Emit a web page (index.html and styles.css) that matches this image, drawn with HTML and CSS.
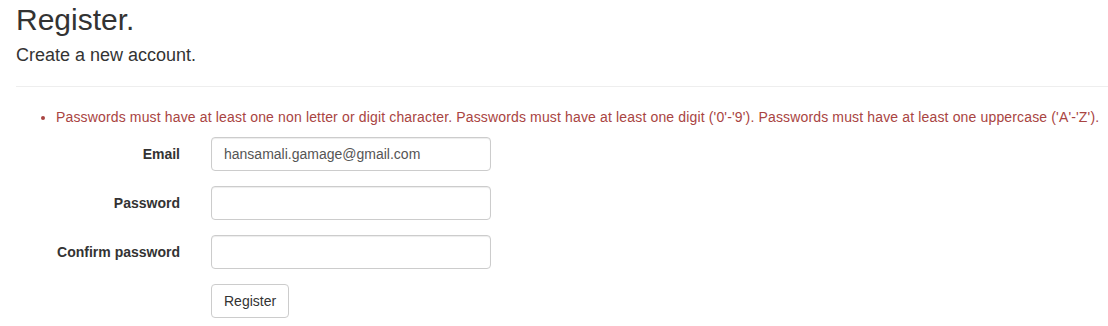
FILE: index.html
```html
<!DOCTYPE html>
<html lang="en">
<head>
  <meta charset="UTF-8" />
  <meta name="viewport" content="width=device-width, initial-scale=1.0" />
  <title>Register</title>
  <link rel="stylesheet" href="styles.css">
</head>
<body>
  <div class="container">
    <h2>Register.</h2>
    <h4>Create a new account.</h4>
    <hr />

    <form class="form-horizontal">
      <div class="text-danger">
        <ul>
          <li>Passwords must have at least one non letter or digit character. Passwords must have at least one digit ('0'-'9'). Passwords must have at least one uppercase ('A'-'Z').</li>
        </ul>
      </div>

      <div class="form-group">
        <label class="control-label" for="email">Email</label>
        <input class="form-control" type="text" id="email" value="hansamali.gamage@gmail.com" />
      </div>
      <div class="form-group">
        <label class="control-label" for="password">Password</label>
        <input class="form-control" type="password" id="password" />
      </div>
      <div class="form-group">
        <label class="control-label" for="confirm">Confirm password</label>
        <input class="form-control" type="password" id="confirm" />
      </div>
      <div class="form-group">
        <span class="control-label"></span>
        <button type="submit" class="btn">Register</button>
      </div>
    </form>
  </div>
</body>
</html>
```

FILE: styles.css
```css
html, body {
  margin: 0;
  overflow: hidden;
}
body {
  font-family: "Liberation Sans", Helvetica, Arial, sans-serif;
  font-size: 14px;
  line-height: 20px;
  color: #333;
  background-color: #fff;
}
.container {
  width: 1140px;
  padding: 3px 0 0 16px;
}
h2, h4 {
  font-weight: 500;
  line-height: 1.1;
  color: #333;
}
h2 {
  font-size: 30px;
  margin: 0 0 10px;
}
h4 {
  font-size: 18px;
  margin: 10px 0;
}
hr {
  border: 0;
  border-top: 1px solid #eee;
  margin: 20px 0;
}
.text-danger {
  color: #a94442;
}
.text-danger ul {
  margin: 0 0 10px;
  padding-left: 40px;
  letter-spacing: 0.15px;
}
.form-group {
  display: flex;
  align-items: flex-start;
  margin-bottom: 15px;
}
.control-label {
  width: 164px;
  margin-right: 31px;
  padding-top: 7px;
  text-align: right;
  font-weight: bold;
}
.form-control {
  box-sizing: border-box;
  width: 280px;
  height: 34px;
  padding: 6px 12px;
  font-family: inherit;
  font-size: 14px;
  line-height: 20px;
  color: #555;
  background-color: #fff;
  border: 1px solid #ccc;
  border-radius: 4px;
  box-shadow: inset 0 1px 1px rgba(0,0,0,0.075);
}
.btn {
  box-sizing: border-box;
  height: 34px;
  padding: 6px 12px;
  font-family: inherit;
  font-size: 14px;
  line-height: 20px;
  color: #333;
  background-color: #fff;
  border: 1px solid #ccc;
  border-radius: 4px;
  cursor: pointer;
}
```
